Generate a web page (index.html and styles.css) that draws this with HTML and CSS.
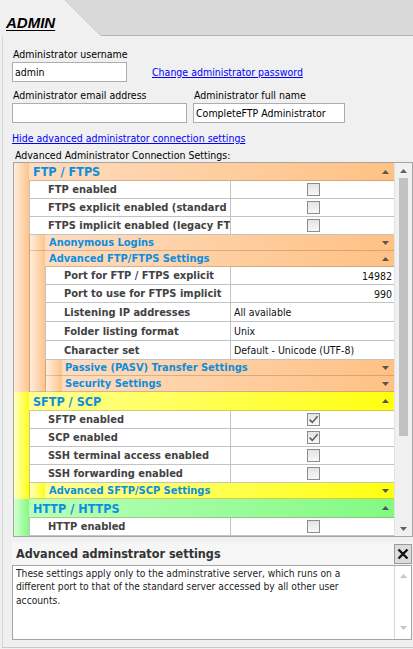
FILE: index.html
```html
<!DOCTYPE html>
<html lang="en">
<head>
<meta charset="utf-8">
<title>ADMIN</title>
<link rel="stylesheet" href="styles.css">
</head>
<body>
<div class="tabbar">
  <div class="tab"><span class="tab-title">ADMIN</span></div>
  <svg class="tab-slant" width="36" height="36" viewBox="0 0 36 36"><polygon points="0,0 35,35 36,36 0,36" fill="#f0f0f0"/><line x1="0" y1="0" x2="35.5" y2="35.5" stroke="#c8c8c8" stroke-width="1"/></svg>
</div>
<div class="panel">
  <div class="row1">
    <div class="field f1"><div class="lbl">Administrator username</div><div class="textbox">admin</div></div>
    <a class="link" href="#">Change administrator password</a>
  </div>
  <div class="row2">
    <div class="field f2"><div class="lbl">Administrator email address</div><div class="textbox"></div></div>
    <div class="field f3"><div class="lbl">Administrator full name</div><div class="textbox">CompleteFTP Administrator</div></div>
  </div>
  <a class="link hide" href="#">Hide advanced administrator connection settings</a>
  <div class="caption">Advanced Administrator Connection Settings:</div>
  <div class="grid">
    <div class="rows">
      <div class="group g1 orange">
        <div class="margin"></div>
        <div class="gc">
          <div class="head cat h18"><span>FTP / FTPS</span><svg class="arr" width="7" height="4" viewBox="0 0 7 4"><polygon points="0,4 7,4 3.5,0"/></svg></div>
          <div class="prop"><div class="label">FTP enabled</div><div class="value c"><span class="cb"></span></div></div>
          <div class="prop"><div class="label">FTPS explicit enabled (standard FTPS)</div><div class="value c"><span class="cb"></span></div></div>
          <div class="prop"><div class="label">FTPS implicit enabled (legacy FTPS)</div><div class="value c"><span class="cb"></span></div></div>
          <div class="group g2">
            <div class="margin"></div>
            <div class="gc">
              <div class="head sub"><span>Anonymous Logins</span><svg class="arr" width="7" height="4" viewBox="0 0 7 4"><polygon points="0,0 7,0 3.5,4"/></svg></div>
            </div>
          </div>
          <div class="group g2">
            <div class="margin"></div>
            <div class="gc">
              <div class="head sub"><span>Advanced FTP/FTPS Settings</span><svg class="arr" width="7" height="4" viewBox="0 0 7 4"><polygon points="0,4 7,4 3.5,0"/></svg></div>
              <div class="prop"><div class="label">Port for FTP / FTPS explicit</div><div class="value r">14982</div></div>
              <div class="prop"><div class="label">Port to use for FTPS implicit</div><div class="value r">990</div></div>
              <div class="prop t"><div class="label">Listening IP addresses</div><div class="value">All available</div></div>
              <div class="prop t"><div class="label">Folder listing format</div><div class="value">Unix</div></div>
              <div class="prop t"><div class="label">Character set</div><div class="value">Default - Unicode (UTF-8)</div></div>
              <div class="group g3">
                <div class="margin"></div>
                <div class="gc">
                  <div class="head sub s3"><span>Passive (PASV) Transfer Settings</span><svg class="arr" width="7" height="4" viewBox="0 0 7 4"><polygon points="0,0 7,0 3.5,4"/></svg></div>
                </div>
              </div>
              <div class="group g3">
                <div class="margin"></div>
                <div class="gc">
                  <div class="head sub s3"><span>Security Settings</span><svg class="arr" width="7" height="4" viewBox="0 0 7 4"><polygon points="0,0 7,0 3.5,4"/></svg></div>
                </div>
              </div>
            </div>
          </div>
        </div>
      </div>
      <div class="group g1 yellow">
        <div class="margin"></div>
        <div class="gc">
          <div class="head cat"><span>SFTP / SCP</span><svg class="arr" width="7" height="4" viewBox="0 0 7 4"><polygon points="0,4 7,4 3.5,0"/></svg></div>
          <div class="prop"><div class="label">SFTP enabled</div><div class="value c"><span class="cb"><svg width="11" height="11" viewBox="0 0 11 11"><path d="M1.6 5.6 L4.3 8.4 L9.6 2.2" fill="none" stroke="#5f5f5f" stroke-width="1.6"/></svg></span></div></div>
          <div class="prop"><div class="label">SCP enabled</div><div class="value c"><span class="cb"><svg width="11" height="11" viewBox="0 0 11 11"><path d="M1.6 5.6 L4.3 8.4 L9.6 2.2" fill="none" stroke="#5f5f5f" stroke-width="1.6"/></svg></span></div></div>
          <div class="prop"><div class="label">SSH terminal access enabled</div><div class="value c"><span class="cb"></span></div></div>
          <div class="prop"><div class="label">SSH forwarding enabled</div><div class="value c"><span class="cb"></span></div></div>
          <div class="group g2">
            <div class="margin"></div>
            <div class="gc">
              <div class="head sub"><span>Advanced SFTP/SCP Settings</span><svg class="arr" width="7" height="4" viewBox="0 0 7 4"><polygon points="0,0 7,0 3.5,4"/></svg></div>
            </div>
          </div>
        </div>
      </div>
      <div class="group g1 green">
        <div class="margin"></div>
        <div class="gc">
          <div class="head cat"><span>HTTP / HTTPS</span><svg class="arr" width="7" height="4" viewBox="0 0 7 4"><polygon points="0,4 7,4 3.5,0"/></svg></div>
          <div class="prop"><div class="label">HTTP enabled</div><div class="value c"><span class="cb"></span></div></div>
        </div>
      </div>
    </div>
    <div class="vscroll">
      <svg class="sarr" width="7" height="4" viewBox="0 0 7 4"><polygon points="0,4 7,4 3.5,0"/></svg>
      <div class="thumb"></div>
      <div class="spacer"></div>
      <svg class="sarr" width="7" height="4" viewBox="0 0 7 4"><polygon points="0,0 7,0 3.5,4"/></svg>
    </div>
  </div>
  <div class="desc">
    <div class="desc-head">
      <span class="desc-title">Advanced adminstrator settings</span>
      <button class="close" type="button"><svg width="12" height="12" viewBox="0 0 12 12"><path d="M1.5 1.5 L10.5 10.5 M10.5 1.5 L1.5 10.5" stroke="#111" stroke-width="2.4" fill="none"/></svg></button>
    </div>
    <div class="desc-body">
      <p class="desc-text">These settings apply only to the adminstrative server, which runs on a<br>different port to that of the standard server accessed by all other user<br>accounts.</p>
      <div class="vscroll2">
        <svg class="sarr2" width="7" height="4" viewBox="0 0 7 4"><polygon points="0,4 7,4 3.5,0"/></svg>
        <svg class="sarr2" width="7" height="4" viewBox="0 0 7 4"><polygon points="0,0 7,0 3.5,4"/></svg>
      </div>
    </div>
  </div>
</div>
</body>
</html>
```
FILE: styles.css
```css
* { box-sizing: border-box; }
html, body { margin: 0; padding: 0; }
body {
  width: 413px;
  height: 649px;
  overflow: hidden;
  background: #f0f0f0;
  font-family: "DejaVu Sans Condensed", "DejaVu Sans", sans-serif;
  font-stretch: condensed;
  font-size: 10.5px;
  color: #000;
}

/* tab bar */
.tabbar {
  height: 36px;
  background: #d9d9d9;
  border-bottom: 1px solid #b4b4b4;
  display: flex;
  align-items: flex-start;
}
.tab {
  width: 65px;
  height: 36px;
  margin-bottom: -1px;
  background: #f0f0f0;
  padding: 14px 0 0 6px;
}
.tab-title {
  font-family: "Liberation Sans", Arial, sans-serif;
  font-stretch: normal;
  font-weight: bold;
  font-style: italic;
  font-size: 15px;
  line-height: 17px;
  text-decoration: underline;
  text-underline-offset: 2px;
  color: #000;
}
.tab-slant { display: block; margin-bottom: -1px; }

/* main panel */
.panel {
  height: 612px;
  margin-left: 2px;
  border-left: 1px solid #d6d6d6;
  border-bottom: 1px solid #c8c8c8;
  padding: 12px 0 0 9px;
}
.lbl { line-height: 13px; padding-left: 1px; white-space: nowrap; }
.textbox {
  margin-top: 1px;
  height: 20px;
  border: 1px solid #abadb3;
  background: #fff;
  padding-left: 2px;
  line-height: 18px;
  white-space: nowrap;
  overflow: hidden;
}
.row1 { display: flex; align-items: flex-end; gap: 25px; }
.f1 { width: 115px; }
.link { color: #0000ff; text-decoration: underline; line-height: 20px; white-space: nowrap; }
.row2 { display: flex; gap: 6px; margin-top: 7px; }
.f2 { width: 175px; }
.f3 { width: 152px; }
.hide { display: block; margin-top: 9px; line-height: 13px; }
.caption { margin-top: 4px; line-height: 13px; padding-left: 3px; }

/* property grid */
.grid {
  margin-left: 1px;
  width: 400px;
  height: 375px;
  border: 1px solid #a5a5a5;
  display: flex;
  background: #fff;
}
.rows { width: 380px; height: 373px; overflow: hidden; flex: none; }
.group { display: flex; }
.margin { flex: none; }
.g1 > .margin { width: 15px; }
.g2 > .margin { width: 16px; border-left: 1px solid rgba(150, 110, 70, 0.35); border-bottom: 1px solid rgba(150, 110, 70, 0.3); }
.g3 > .margin { width: 17px; border-left: 1px solid rgba(150, 110, 70, 0.35); border-bottom: 1px solid rgba(150, 110, 70, 0.3); }
.gc { flex: 1; min-width: 0; display: flex; flex-direction: column; }

.orange .margin { background: linear-gradient(to right, #ffeedd, #fdc48b); }
.orange .head { background: linear-gradient(to right, #fedcbe, #ffc184); }
.yellow .margin { background: linear-gradient(to right, #ffffc8, #ffff10); }
.yellow .head { background: linear-gradient(to right, #ffff90, #ffff10); }
.green .margin { background: linear-gradient(to right, #d4ffd4, #82fb82); }
.green .head { background: linear-gradient(to right, #b8ffb8, #82fa82); }

.head {
  display: flex;
  align-items: center;
  justify-content: space-between;
  border-bottom: 1px solid rgba(140, 110, 80, 0.35);
  color: #0c8edf;
  font-weight: bold;
  white-space: nowrap;
  padding: 0 5px 0 4px;
}
.cat { font-size: 12.5px; height: 19px; }
.cat.h18 { height: 18px; }
.sub { font-size: 11px; height: 16px; }
.sub.s3 { padding-left: 3px; }
.arr { flex: none; fill: #555; }

.prop {
  display: flex;
  height: 18px;
  background: #fff;
  border-bottom: 1px solid #c3c3c3;
  border-left: 1px solid #c3c3c3;
}
.prop.t { height: 19px; }
.label {
  flex: 1;
  min-width: 0;
  overflow: hidden;
  white-space: nowrap;
  padding-left: 18px;
  font-size: 11px;
  font-weight: bold;
  color: #424242;
  display: flex;
  align-items: center;
}
.value {
  flex: none;
  width: 164px;
  border-left: 1px solid #c3c3c3;
  display: flex;
  align-items: center;
  padding: 0 2px 0 3px;
  white-space: nowrap;
  color: #111;
}
.value.c { justify-content: center; }
.value.r { justify-content: flex-end; }
.cb {
  width: 13px;
  height: 13px;
  border: 1px solid #8c8c8c;
  background: linear-gradient(#e4e4e4, #f8f8f8);
  display: flex;
  align-items: center;
  justify-content: center;
}
.cb svg { display: block; }

.vscroll {
  flex: 1;
  border-left: 1px solid #e2e2e2;
  background: #f0f0f0;
  display: flex;
  flex-direction: column;
  align-items: center;
  padding: 6px 0 5px;
}
.sarr { display: block; fill: #606060; flex: none; }
.thumb { width: 9px; height: 258px; margin-top: 5px; background: #c2c2c2; flex: none; }
.spacer { flex: 1; }

/* description */
.desc { width: 400px; margin-top: 5px; }
.desc-head {
  height: 23px;
  background: #f6f6f6;
  display: flex;
  align-items: center;
  padding-left: 4px;
}
.desc-title { font-size: 12.5px; font-weight: bold; color: #333; }
.close {
  margin-left: auto;
  width: 18px;
  height: 20px;
  padding: 0;
  border: 1px solid #9a9a9a;
  background: #dcdcdc;
  display: flex;
  align-items: center;
  justify-content: center;
}
.close svg { display: block; }
.desc-body {
  height: 75px;
  border: 1px solid #a5a5a5;
  background: #fff;
  display: flex;
}
.desc-text {
  flex: 1;
  margin: 0;
  padding: 1px 3px;
  font-size: 10.2px;
  line-height: 13.3px;
  color: #222;
}
.vscroll2 {
  width: 17px;
  flex: none;
  border-left: 1px solid #d8d8d8;
  display: flex;
  flex-direction: column;
  align-items: center;
  justify-content: space-between;
  padding: 8px 0 9px;
}
.sarr2 { display: block; fill: #c6c6c6; }
```
